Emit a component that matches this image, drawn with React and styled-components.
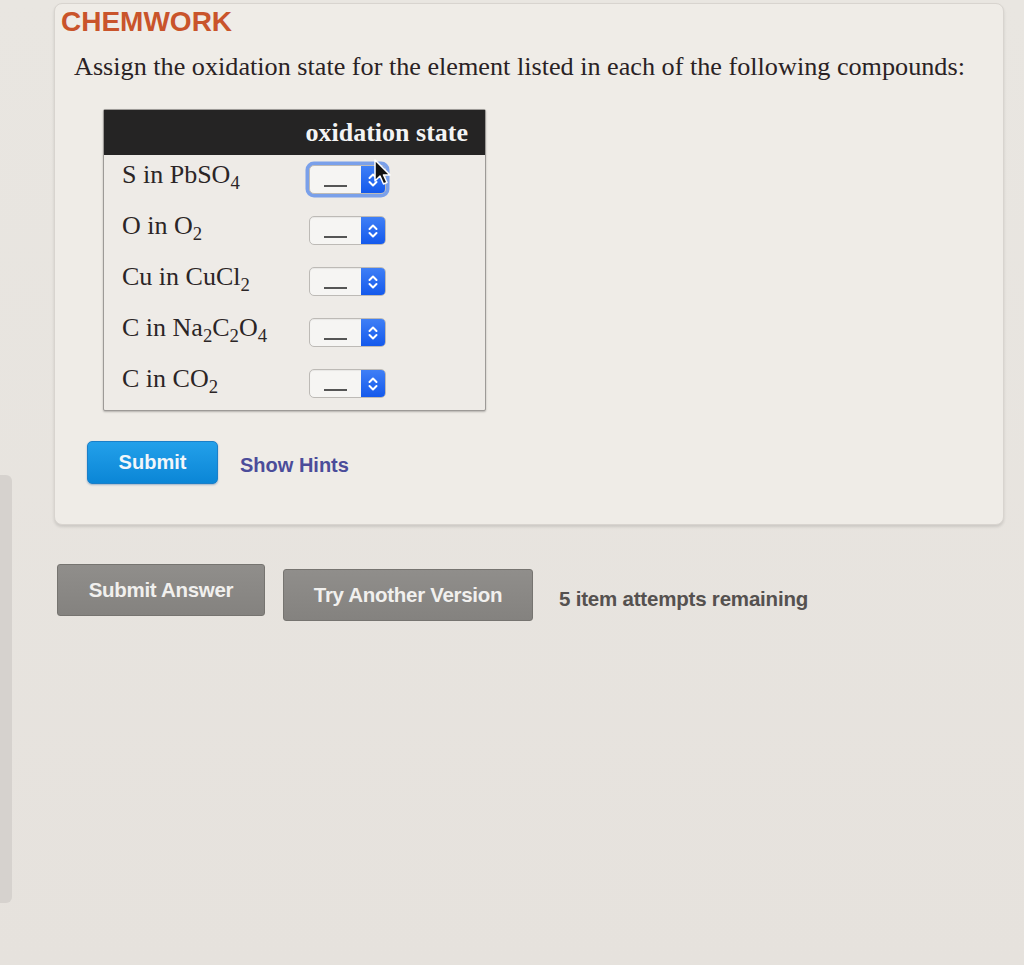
import React from "react";
import styled, { createGlobalStyle } from "styled-components";

const Global = createGlobalStyle`
  html, body { margin: 0; padding: 0; background: #e7e3de; }
  body { font-family: "Liberation Sans", Arial, sans-serif; }
  * { box-sizing: border-box; }
`;

const Page = styled.div`
  display: grid;
  grid-template-columns: 14px 1fr;
  min-height: 965px;
  padding-top: 3px;
  background: linear-gradient(180deg, #e9e6e1 0%, #e6e2dd 100%);
`;

const SideRail = styled.div`
  display: flex;
  flex-direction: column;
`;

const RailBar = styled.div`
  margin-top: 472px;
  width: 12px;
  height: 428px;
  background: #d6d2ce;
  border-radius: 0 6px 6px 0;
`;

const Main = styled.div`
  display: flex;
  flex-direction: column;
  padding-left: 40px;
`;

const Card = styled.section`
  width: 950px;
  background: #efece7;
  border: 1px solid #d8d4cf;
  border-radius: 8px;
  box-shadow: 0 2px 3px rgba(0, 0, 0, 0.12);
  padding: 2px 0 40px 6px;
  display: flex;
  flex-direction: column;
  align-items: flex-start;
`;

const Title = styled.h1`
  margin: 0;
  font-family: "Liberation Sans", Arial, sans-serif;
  font-weight: 700;
  font-size: 28px;
  line-height: 32px;
  color: #c9542b;
`;

const Prompt = styled.p`
  margin: 14px 0 0 13px;
  font-family: "Liberation Serif", "Times New Roman", serif;
  font-size: 26.2px;
  line-height: 30px;
  color: #2a2224;
`;

const Table = styled.div`
  margin: 27px 0 0 42px;
  width: 383px;
  border: 1px solid #9d9a97;
  border-radius: 2px;
  box-shadow: 0 1px 2px rgba(0, 0, 0, 0.25);
  background: #eeebe7;
  font-family: "Liberation Serif", "Times New Roman", serif;
`;

const HeaderRow = styled.div`
  height: 45px;
  background: #252424;
  color: #f4f4f4;
  font-weight: 700;
  font-size: 26px;
  display: flex;
  align-items: center;
  justify-content: flex-end;
  padding-right: 17px;
`;

const Row = styled.div`
  height: 51px;
  display: grid;
  grid-template-columns: 205px 1fr;
  align-items: center;
`;

const Label = styled.div`
  padding-left: 18px;
  font-size: 26px;
  color: #2b2526;
  margin-top: -11px;
  sub {
    font-size: 0.72em;
    vertical-align: -0.3em;
    line-height: 0;
  }
`;

const SelectWrap = styled.div`
  position: relative;
  display: flex;
  align-items: center;
  margin-top: -2px;
`;

const Select = styled.div`
  width: 77px;
  height: 29px;
  display: flex;
  border-radius: 5px;
  border: 1px solid #bdbab6;
  background: #f6f5f3;
  box-shadow: ${(p) =>
    p.$focused ? "0 0 0 3.5px #7aa0ea" : "inset 0 1px 1px rgba(0,0,0,0.06)"};
  overflow: hidden;
`;

const SelectValue = styled.div`
  flex: 1;
  display: flex;
  align-items: flex-end;
  justify-content: center;
  padding-bottom: 6px;
`;

const Dash = styled.div`
  width: 23px;
  height: 2px;
  background: #555;
`;

const SelectArrow = styled.div`
  width: 24px;
  background: linear-gradient(180deg, #3f7ff6 0%, #1459ec 100%);
  display: flex;
  align-items: center;
  justify-content: center;
`;

const Cursor = styled.svg`
  position: absolute;
  left: 64px;
  top: -6px;
  width: 20px;
  height: 28px;
`;

const ActionRow = styled.div`
  margin: 30px 0 0 26px;
  display: flex;
  align-items: center;
  gap: 22px;
`;

const SubmitButton = styled.button`
  width: 131px;
  height: 43px;
  border: 1px solid #1b7fc8;
  border-radius: 5px;
  background: linear-gradient(180deg, #23a0ea 0%, #0b86d6 100%);
  box-shadow: 0 1px 2px rgba(0, 70, 140, 0.35);
  color: #f2f6fa;
  font-family: "Liberation Sans", Arial, sans-serif;
  font-weight: 700;
  font-size: 20px;
  padding: 0;
`;

const HintLink = styled.a`
  font-family: "Liberation Sans", Arial, sans-serif;
  font-weight: 700;
  font-size: 20px;
  color: #4b4c9a;
  text-decoration: none;
  margin-top: 5px;
`;

const BottomRow = styled.div`
  margin: 39px 0 0 3px;
  display: flex;
  align-items: flex-start;
`;

const GrayButton = styled.button`
  width: ${(p) => p.$w}px;
  height: 52px;
  margin-right: ${(p) => p.$gap}px;
  margin-top: ${(p) => p.$offset || 0}px;
  border: 1px solid #767470;
  border-radius: 3px;
  background: linear-gradient(180deg, #908e8b 0%, #8a8885 50%, #84827f 100%);
  color: #f1f0ee;
  font-family: "Liberation Sans", Arial, sans-serif;
  font-weight: 700;
  font-size: 20.5px;
  letter-spacing: -0.3px;
  padding: 0;
`;

const Attempts = styled.span`
  font-family: "Liberation Sans", Arial, sans-serif;
  font-weight: 700;
  font-size: 20.5px;
  line-height: 24px;
  color: #55514f;
  margin-top: 23px;
  letter-spacing: -0.2px;
`;

const Chevrons = () => (
  <svg width="12" height="16" viewBox="0 0 12 16">
    <path d="M2.5 6 L6 2.5 L9.5 6" fill="none" stroke="#fff" strokeWidth="2" strokeLinecap="round" strokeLinejoin="round" />
    <path d="M2.5 10 L6 13.5 L9.5 10" fill="none" stroke="#fff" strokeWidth="2" strokeLinecap="round" strokeLinejoin="round" />
  </svg>
);

const rows = [
  { label: <>S in PbSO<sub>4</sub></>, focused: true },
  { label: <>O in O<sub>2</sub></> },
  { label: <>Cu in CuCl<sub>2</sub></> },
  { label: <>C in Na<sub>2</sub>C<sub>2</sub>O<sub>4</sub></> },
  { label: <>C in CO<sub>2</sub></> },
];

export default function App() {
  return (
    <>
      <Global />
      <Page>
        <SideRail>
          <RailBar />
        </SideRail>
        <Main>
          <Card>
            <Title>CHEMWORK</Title>
            <Prompt>
              Assign the oxidation state for the element listed in each of the following compounds:
            </Prompt>
            <Table>
              <HeaderRow>oxidation state</HeaderRow>
              {rows.map((r, i) => (
                <Row key={i}>
                  <Label>{r.label}</Label>
                  <SelectWrap>
                    <Select $focused={r.focused}>
                      <SelectValue>
                        <Dash />
                      </SelectValue>
                      <SelectArrow>
                        <Chevrons />
                      </SelectArrow>
                    </Select>
                    {r.focused && (
                      <Cursor viewBox="0 0 20 28">
                        <path d="M2 1 L2 22 L7 17 L10.5 25 L14 23.5 L10.5 16 L17 16 Z" fill="#111" stroke="#fff" strokeWidth="1.5" strokeLinejoin="round" />
                      </Cursor>
                    )}
                  </SelectWrap>
                </Row>
              ))}
            </Table>
            <ActionRow>
              <SubmitButton>Submit</SubmitButton>
              <HintLink href="#">Show Hints</HintLink>
            </ActionRow>
          </Card>
          <BottomRow>
            <GrayButton $w={208} $gap={18}>Submit Answer</GrayButton>
            <GrayButton $w={250} $gap={26} $offset={5}>Try Another Version</GrayButton>
            <Attempts>5 item attempts remaining</Attempts>
          </BottomRow>
        </Main>
      </Page>
    </>
  );
}
